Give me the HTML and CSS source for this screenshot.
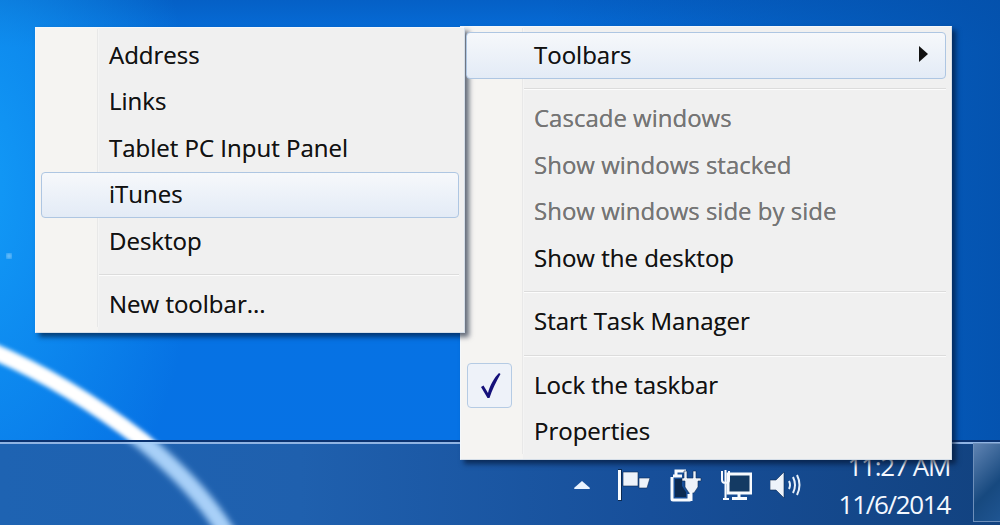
FILE: index.html
```html
<!DOCTYPE html>
<html lang="en">
<head>
<meta charset="utf-8">
<title>Taskbar toolbars menu</title>
<link rel="stylesheet" href="styles.css">
</head>
<body>
<div class="screen">
  <svg class="wallpaper" width="1000" height="525" viewBox="0 0 1000 525">
    <defs>
      <filter id="soft"><feGaussianBlur stdDeviation="2"></feGaussianBlur></filter>
    </defs>
    <path class="arc" d="M-10 350 C50 375 100 408 143 441 C175 468 205 497 228 535" filter="url(#soft)"></path>
    <circle class="spark" cx="9" cy="256" r="2.5" filter="url(#soft)"></circle>
  </svg>
  <div class="desk"></div>
  <div class="taskbar">
    <svg class="bar-arc" width="1000" height="83" viewBox="0 442 1000 83">
      <defs>
        <filter id="soft2"><feGaussianBlur stdDeviation="3"></feGaussianBlur></filter>
      </defs>
      <path class="arc-glass" d="M-10 350 C50 375 100 408 143 441 C175 468 205 497 228 535" filter="url(#soft2)"></path>
    </svg>
    <div class="tray">
      <svg class="caret" width="16" height="8" viewBox="0 0 16 8"><path d="M8 0 L16 7 Q16 8 15 8 H1 Q0 8 0 7Z"></path></svg>
      <svg class="flag" width="32" height="32" viewBox="0 0 32 32">
        <path class="ol" d="M1.5 0 V32"></path>
        <path class="ws" d="M1.5 1 V31"></path>
        <path class="wf" d="M5 3 H20 V17 H5Z"></path>
        <path class="wf" d="M21 9 H32 L29 19 H21Z"></path>
      </svg>
      <svg class="plug" width="32" height="34" viewBox="0 0 32 34">
        <path class="ws2" d="M6 7 V3 H16 M3 8 H12 M2 9 V31 Q2 32 3 32 H19 V26"></path>
        <path class="ds" d="M5 11 H12 V18 L16 24 V29 H5Z"></path>
        <path class="wf" d="M14 10 V3 H17 V10 H23 V3 H26 V10 H31 V13 H28 V19 L24 25 H19 L15 19 V13 H12 V10Z"></path>
        <path class="ws2" d="M21 24 V33"></path>
      </svg>
      <svg class="net" width="32" height="31" viewBox="0 0 32 31">
        <rect class="screenbox" x="8" y="4" width="23" height="19"></rect>
        <path class="ws3" d="M2 1 V10 Q2 13 5.5 13 Q9 13 9 10 V1 M5.500 0 V28 M3 29 H9"></path>
        <path class="ws2" d="M19 23 V28 M12 28.500 H27"></path>
      </svg>
      <svg class="vol" width="32" height="28" viewBox="0 0 32 28">
        <path class="wf" d="M0 9 H6 L14 1 V27 L6 19 H0Z"></path>
        <path class="arcs" d="M19 10 Q21 14 19 18 M23 6 Q27 14 23 22 M27 4 Q32 14 27 24"></path>
      </svg>
      <div class="clock">
        <div>11:27 AM</div>
        <div>11/6/2014</div>
      </div>
    </div>
    <div class="show-desktop"></div>
  </div>

  <div class="menu menu-right">
    <div class="row hot"><span>Toolbars</span><i class="arrow"></i></div>
    <div class="sep"></div>
    <div class="row off"><span>Cascade windows</span></div>
    <div class="row off"><span>Show windows stacked</span></div>
    <div class="row off"><span>Show windows side by side</span></div>
    <div class="row"><span>Show the desktop</span></div>
    <div class="sep"></div>
    <div class="row"><span>Start Task Manager</span></div>
    <div class="sep"></div>
    <div class="row">
      <div class="check"><svg width="24" height="28" viewBox="0 0 24 28"><path d="M3 15 L5.500 13.500 L10 21 C12 13 16 6 21 1 L22.500 2 C18 10 14 18 11.500 26 H9.500Z"></path></svg></div>
      <span>Lock the taskbar</span>
    </div>
    <div class="row"><span>Properties</span></div>
  </div>

  <div class="menu menu-left">
    <div class="row"><span>Address</span></div>
    <div class="row"><span>Links</span></div>
    <div class="row"><span>Tablet PC Input Panel</span></div>
    <div class="row hot"><span>iTunes</span></div>
    <div class="row"><span>Desktop</span></div>
    <div class="sep"></div>
    <div class="row"><span>New toolbar...</span></div>
  </div>
</div>
</body>
</html>
```
FILE: styles.css
```css
html, body {
  margin: 0;
  padding: 0;
  overflow: hidden;
}

.screen {
  position: relative;
  width: 1000px;
  height: 525px;
  overflow: hidden;
  display: flex;
  flex-direction: column;
  font-family: "Open Sans", "Noto Sans", "Liberation Sans", sans-serif;
  background:
    linear-gradient(90deg, rgba(4, 90, 190, 0) 55%, rgba(4, 80, 170, .9) 100%),
    linear-gradient(180deg, #0560c6 0, #0672e0 9%, #0672e6 100%),
    #0672e6;
}

.screen::before {
  content: "";
  position: absolute;
  left: 0;
  top: 0;
  width: 1000px;
  height: 525px;
  background:
    radial-gradient(ellipse 240px 420px at -40px 190px, rgba(20, 160, 250, .95), rgba(20, 160, 250, 0));
}

.wallpaper {
  position: absolute;
  left: 0;
  top: 0;
}

.arc {
  fill: none;
  stroke: #fff;
  stroke-width: 16;
}

.arc-glass {
  fill: none;
  stroke: #a8d0f8;
  stroke-width: 17;
}

.spark {
  fill: #bfe6ff;
}

.desk {
  flex: 1;
}

.taskbar {
  position: relative;
  height: 85px;
  box-sizing: border-box;
  display: flex;
  justify-content: flex-end;
  align-items: stretch;
  border-top: 2px solid #0a3270;
  background: linear-gradient(90deg, #1e63b2, #1f60ae 30%, #174f9a 65%, #12427f);
}

.taskbar::before {
  content: "";
  position: absolute;
  left: 0;
  right: 0;
  top: 0;
  height: 2px;
  background: #8fb4e4;
}

.bar-arc {
  position: absolute;
  left: 0;
  top: 0;
}

.tray {
  position: relative;
  display: flex;
  align-items: center;
  padding-top: 5px;
  height: 76px;
  margin-right: 23px;
}

.tray svg {
  display: block;
  flex: none;
}

.caret {
  margin-right: 28px;
  fill: #e9f3ff;
}

.flag {
  margin-right: 20px;
}

.plug {
  margin-right: 18px;
}

.net {
  margin-right: 18px;
}

.vol {
  margin-right: 37px;
}

.ws {
  fill: none;
  stroke: #f8fbff;
  stroke-width: 3;
}

.ws2 {
  fill: none;
  stroke: #f8fbff;
  stroke-width: 3;
}

.ws3 {
  fill: none;
  stroke: #f8fbff;
  stroke-width: 2;
}

.ol {
  fill: none;
  stroke: #0b2a52;
  stroke-width: 5;
}

.ds {
  fill: #0b2a52;
}

.wf {
  fill: #eef3fa;
  stroke: #0b2a52;
  stroke-width: .6;
}

.screenbox {
  fill: #143a63;
  stroke: #f8fbff;
  stroke-width: 3;
}

.arcs {
  fill: none;
  stroke: #e8f1fb;
  stroke-width: 2;
}

.clock {
  color: #f4f8ff;
  font-size: 26px;
  line-height: 38px;
  text-align: right;
  letter-spacing: -1.3px;
}

.show-desktop {
  position: relative;
  width: 27px;
  box-sizing: border-box;
  margin-top: 1px;
  margin-bottom: 3px;
  border: 1px solid #6d8fba;
  border-right: 0;
  background: linear-gradient(135deg, #5f83b2, #17497f 60%, #1f5592);
}

.menu {
  position: absolute;
  box-sizing: border-box;
  padding: 5px 5px 5px;
  background: linear-gradient(90deg, #f5f4f2 62px, #f0f0f0 62px);
  border: 1px solid #f4f8fc;
  border-right-color: #d5dee8;
  border-bottom-color: #d5dee8;
  color: #111;
  font-size: 24px;
  text-shadow: 0 0 .6px rgba(0, 0, 0, .5);
  box-shadow: 4px 4px 5px rgba(0, 15, 40, .6);
}

.menu::before {
  content: "";
  position: absolute;
  top: 1px;
  bottom: 5px;
  left: 61px;
  width: 2px;
  background: linear-gradient(90deg, #e2e2e2, #fafafa);
}

.menu-left {
  left: 35px;
  top: 27px;
  width: 430px;
  height: 306px;
  padding-top: 4px;
}

.menu-right {
  left: 460px;
  top: 26px;
  width: 492px;
  height: 434px;
}

.row {
  position: relative;
  z-index: 1;
  box-sizing: border-box;
  height: 46.5px;
  padding-left: 67px;
  padding-bottom: 2px;
  display: flex;
  align-items: center;
  justify-content: space-between;
  white-space: nowrap;
  border: 1px solid transparent;
}

.hot {
  border-color: #aec6e2;
  border-radius: 4px;
  background: linear-gradient(180deg, #f6f8fb, #e3ebf6);
}

.off {
  color: #757575;
}

.arrow {
  display: block;
  width: 0;
  height: 0;
  margin-right: 17px;
  border-left: 9px solid #111;
  border-top: 8px solid transparent;
  border-bottom: 8px solid transparent;
}

.check {
  position: absolute;
  left: 0;
  top: 0;
  width: 45px;
  height: 45px;
  box-sizing: border-box;
  display: flex;
  align-items: center;
  justify-content: center;
  border: 1px solid #b5cbe4;
  border-radius: 4px;
  background: #eef2f9;
}

.check path {
  fill: #15107a;
}

.sep {
  position: relative;
  z-index: 1;
  height: 2px;
  margin: 9.5px 0 5.5px 58px;
  background: linear-gradient(180deg, #dcdcdc 50%, #fcfcfc 50%);
}
```
